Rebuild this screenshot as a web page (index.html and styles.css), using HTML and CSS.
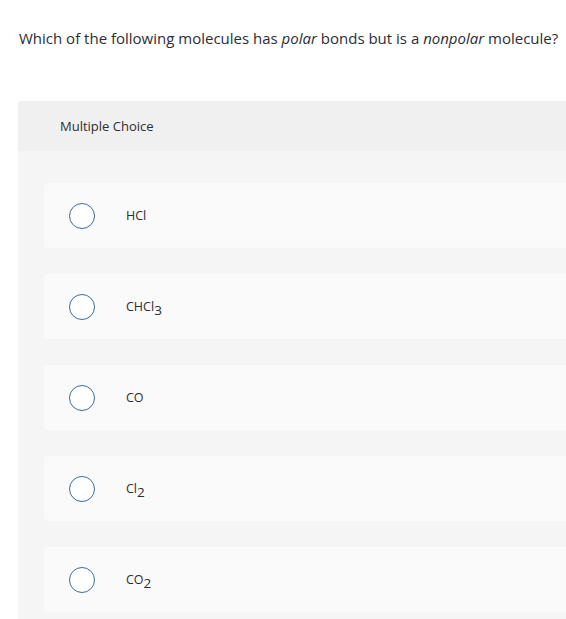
FILE: index.html
```html
<!DOCTYPE html>
<html>
<head>
<meta charset="utf-8">
<link rel="stylesheet" href="styles.css">
</head>
<body>
<div class="page">
  <p class="question">Which of the following molecules has <em>polar</em> bonds but is a <em>nonpolar</em> molecule?</p>
  <div class="panel">
    <div class="panel-head">Multiple Choice</div>
    <div class="panel-body">
      <div class="option"><span class="radio"></span><span class="label">HCl</span></div>
      <div class="option"><span class="radio"></span><span class="label">CHCl<sub>3</sub></span></div>
      <div class="option"><span class="radio"></span><span class="label">CO</span></div>
      <div class="option"><span class="radio"></span><span class="label">Cl<sub>2</sub></span></div>
      <div class="option"><span class="radio"></span><span class="label">CO<sub>2</sub></span></div>
    </div>
  </div>
</div>
</body>
</html>
```
FILE: styles.css
```css
html, body {
  margin: 0;
  padding: 0;
  background: #ffffff;
  overflow: hidden;
}
body {
  font-family: "Open Sans", "Liberation Sans", sans-serif;
  color: #2d2d33;
}
.page {
  padding: 28px 0 0 18px;
}
.question {
  margin: 0 0 0 1px;
  font-size: 15px;
  line-height: 20px;
  white-space: nowrap;
}
.panel {
  margin-top: 53px;
  border-radius: 3px 0 0 0;
  overflow: hidden;
}
.panel-head {
  background: #f0f0f0;
  height: 50px;
  padding-left: 42px;
  display: flex;
  align-items: center;
  font-size: 13px;
  color: #2d2d33;
}
.panel-body {
  background: #f5f5f5;
  padding: 32px 0 7px 26px;
  display: flex;
  flex-direction: column;
  gap: 26px;
}
.option {
  background: #fafafa;
  height: 65px;
  border-radius: 4px 0 0 4px;
  display: flex;
  align-items: center;
  padding-left: 25px;
}
.radio {
  width: 24px;
  height: 24px;
  border: 1.5px solid #3d6c9a;
  border-radius: 50%;
  background: #ffffff;
  flex: none;
}
.label {
  margin-left: 31px;
  font-size: 12.5px;
  color: #2d2d33;
}
.label sub {
  font-size: 13.5px;
  vertical-align: -4px;
  line-height: 0;
}
```
